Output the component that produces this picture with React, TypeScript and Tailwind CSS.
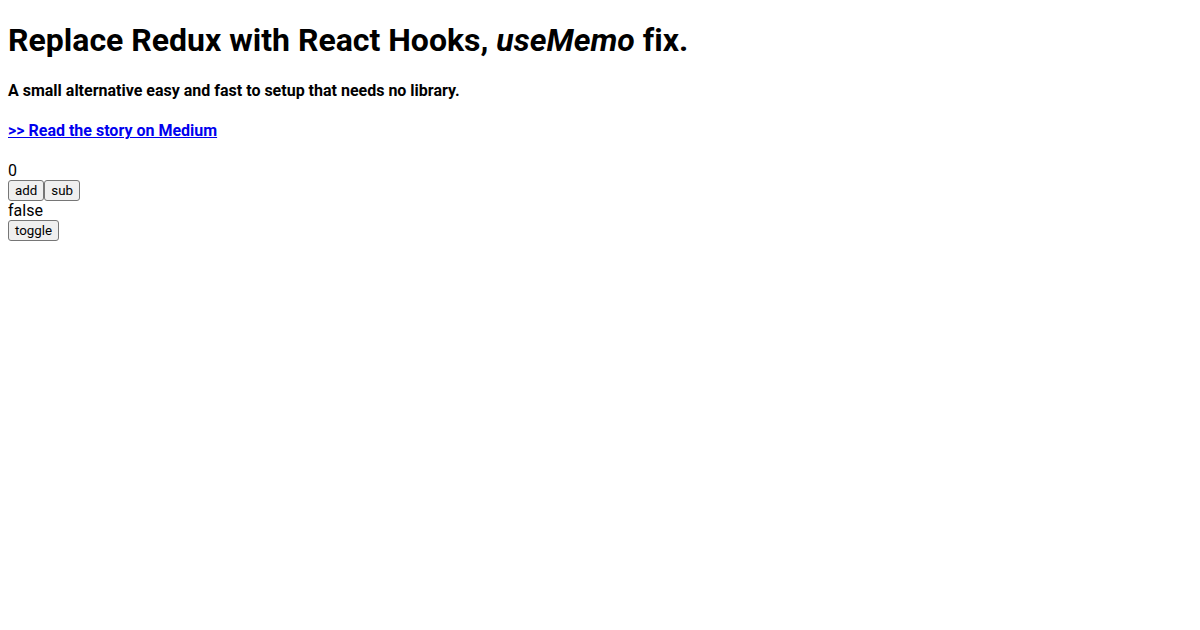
import React, { useState } from 'react';

const btn =
  "inline-block bg-[#efefef] border border-[#767676] rounded-[3px] px-[6px] py-[2px] text-[13.333px] leading-[normal] text-black hover:bg-[#e5e5e5] [font-family:Roboto,sans-serif] align-baseline";

export default function App() {
  const [count, setCount] = useState(0);
  const [on, setOn] = useState(false);

  return (
    <div className="min-h-screen bg-white text-black text-base leading-[normal] px-2 pt-[21.44px] [font-family:Roboto,sans-serif] [font-variant-ligatures:none]">
      <h1 className="text-[32px] font-bold leading-[normal] mb-[21.44px]">
        Replace Redux with React Hooks, <i>useMemo</i> fix.
      </h1>
      <h4 className="text-base font-bold leading-[normal] mb-[21.28px]">
        A small alternative easy and fast to setup that needs no library.
      </h4>
      <h4 className="text-base font-bold leading-[normal] mb-[21.28px]">
        <a href="#" className="text-[#0000ee] underline">
          &gt;&gt; Read the story on Medium
        </a>
      </h4>
      <div>
        <div>{count}</div>
        <div>
          <button className={btn} onClick={() => setCount(count + 1)}>add</button>
          <button className={btn} onClick={() => setCount(count - 1)}>sub</button>
        </div>
      </div>
      <div>
        <div>{on ? 'true' : 'false'}</div>
        <div>
          <button className={btn} onClick={() => setOn(!on)}>toggle</button>
        </div>
      </div>
    </div>
  );
}
